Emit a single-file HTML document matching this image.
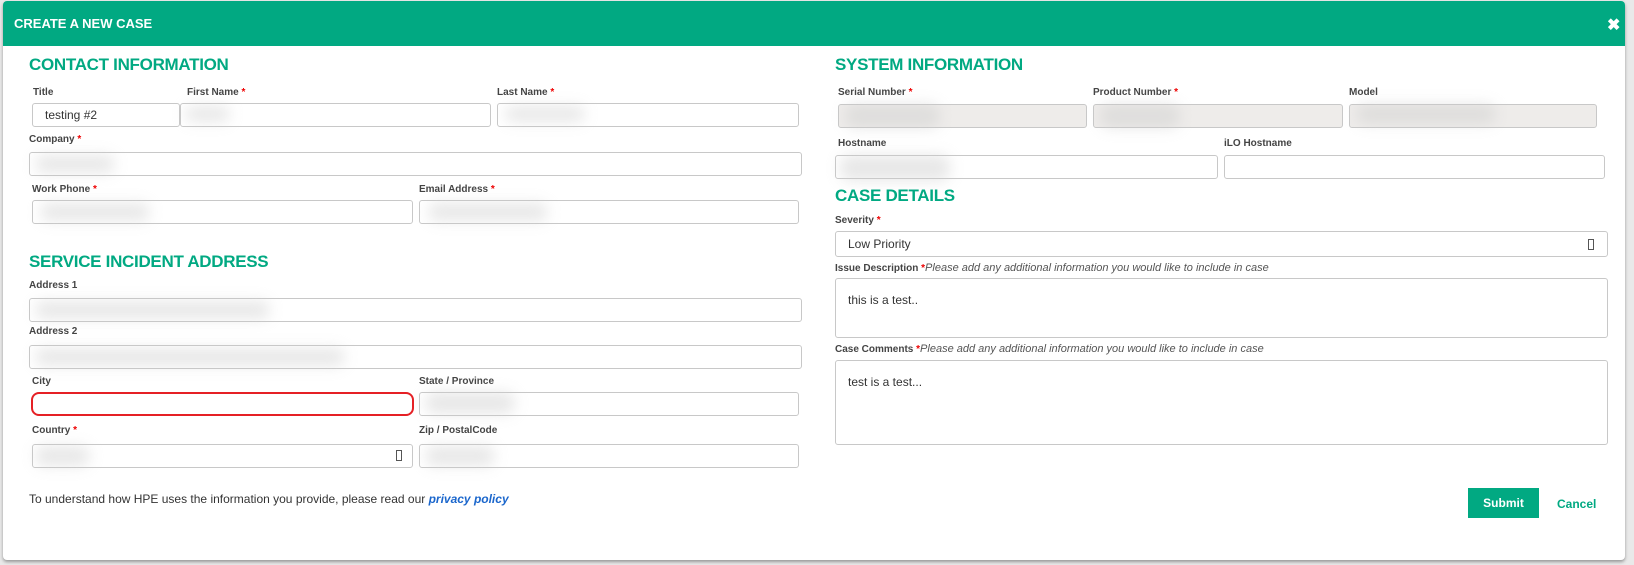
<!DOCTYPE html>
<html><head><meta charset="utf-8"><style>
*{box-sizing:border-box;margin:0;padding:0}
body{width:1634px;height:565px;background:#e9e9e9;font-family:"Liberation Sans",sans-serif;position:relative;overflow:hidden}
.modal{position:absolute;left:3px;top:1px;width:1622px;height:559px;background:#fff;border-radius:4px;box-shadow:0 2px 3px rgba(0,0,0,.35)}
.hdr{position:absolute;left:3px;top:1px;width:1622px;height:45px;background:#01a982;border-radius:4px 4px 0 0}
.abs{position:absolute}
.htitle{left:14px;top:16px;color:#fff;font-weight:bold;font-size:13px}
.x{left:1607px;top:15px;color:#fff;font-weight:bold;font-size:16px}
.sec{position:absolute;color:#01a982;font-weight:bold;font-size:17px;letter-spacing:-0.3px}
.lbl{position:absolute;font-size:10px;font-weight:bold;color:#444;white-space:nowrap}
.lbl i{font-style:italic;font-weight:normal;color:#555;font-size:11px}
.req{color:#e00}
.in{position:absolute;border:1px solid #c8c8c8;border-radius:3px;background:#fff;font-size:12px;color:#333;padding-left:12px;overflow:hidden}
.g{background:#eeecea}
.blur{position:absolute;background:#ccc;filter:blur(7px);border-radius:10px;opacity:.45}
.t{font-size:12px;color:#333}
</style></head><body>
<div class="modal"></div>
<div class="hdr"></div>
<div class="abs htitle">CREATE A NEW CASE</div>
<div class="abs x">✖</div>

<div class="sec" style="left:29px;top:55px">CONTACT INFORMATION</div>
<div class="lbl" style="left:33px;top:87px">Title</div>
<div class="lbl" style="left:187px;top:87px">First Name <span class="req">*</span></div>
<div class="lbl" style="left:497px;top:87px">Last Name <span class="req">*</span></div>
<div class="in" style="left:32px;top:103px;width:148px;height:24px;line-height:22px">testing #2</div>
<div class="in" style="left:180px;top:103px;width:311px;height:24px"></div>
<div class="in" style="left:497px;top:103px;width:302px;height:24px"></div>
<div class="blur" style="left:185px;top:106px;width:45px;height:16px"></div>
<div class="blur" style="left:505px;top:106px;width:80px;height:16px"></div>

<div class="lbl" style="left:29px;top:134px">Company <span class="req">*</span></div>
<div class="in" style="left:29px;top:152px;width:773px;height:24px"></div>
<div class="blur" style="left:35px;top:155px;width:80px;height:18px"></div>

<div class="lbl" style="left:32px;top:184px">Work Phone <span class="req">*</span></div>
<div class="lbl" style="left:419px;top:184px">Email Address <span class="req">*</span></div>
<div class="in" style="left:32px;top:200px;width:381px;height:24px"></div>
<div class="in" style="left:419px;top:200px;width:380px;height:24px"></div>
<div class="blur" style="left:40px;top:203px;width:110px;height:18px"></div>
<div class="blur" style="left:428px;top:203px;width:120px;height:18px"></div>

<div class="sec" style="left:29px;top:252px">SERVICE INCIDENT ADDRESS</div>
<div class="lbl" style="left:29px;top:280px">Address 1</div>
<div class="in" style="left:29px;top:298px;width:773px;height:24px"></div>
<div class="blur" style="left:35px;top:301px;width:235px;height:18px"></div>
<div class="lbl" style="left:29px;top:326px">Address 2</div>
<div class="in" style="left:29px;top:345px;width:773px;height:24px"></div>
<div class="blur" style="left:35px;top:348px;width:310px;height:18px"></div>
<div class="lbl" style="left:32px;top:376px">City</div>
<div class="lbl" style="left:419px;top:376px">State / Province</div>
<div class="in" style="left:31px;top:392px;width:383px;height:24px;border:2px solid #e52025;border-radius:8px"></div>
<div class="in" style="left:419px;top:392px;width:380px;height:24px"></div>
<div class="blur" style="left:425px;top:392px;width:90px;height:22px"></div>
<div class="lbl" style="left:32px;top:425px">Country <span class="req">*</span></div>
<div class="lbl" style="left:419px;top:425px">Zip / PostalCode</div>
<div class="in" style="left:32px;top:444px;width:381px;height:24px"><span style="position:absolute;right:10px;top:5px;width:6px;height:11px;border:1px solid #555"></span></div>
<div class="in" style="left:419px;top:444px;width:380px;height:24px"></div>
<div class="blur" style="left:35px;top:446px;width:55px;height:20px"></div>
<div class="blur" style="left:425px;top:446px;width:70px;height:20px"></div>
<div class="abs t" style="left:29px;top:492px">To understand how HPE uses the information you provide, please read our <b style="color:#1a66cc;font-style:italic">privacy policy</b></div>

<div class="sec" style="left:835px;top:55px">SYSTEM INFORMATION</div>
<div class="lbl" style="left:838px;top:87px">Serial Number <span class="req">*</span></div>
<div class="lbl" style="left:1093px;top:87px">Product Number <span class="req">*</span></div>
<div class="lbl" style="left:1349px;top:87px">Model</div>
<div class="in g" style="left:838px;top:104px;width:249px;height:24px"></div>
<div class="in g" style="left:1093px;top:104px;width:250px;height:24px"></div>
<div class="in g" style="left:1349px;top:104px;width:248px;height:24px"></div>
<div class="blur" style="left:845px;top:104px;width:95px;height:24px"></div>
<div class="blur" style="left:1100px;top:104px;width:80px;height:24px"></div>
<div class="blur" style="left:1356px;top:104px;width:140px;height:20px"></div>
<div class="lbl" style="left:838px;top:138px">Hostname</div>
<div class="lbl" style="left:1224px;top:138px">iLO Hostname</div>
<div class="in" style="left:835px;top:155px;width:383px;height:24px"></div>
<div class="in" style="left:1224px;top:155px;width:381px;height:24px"></div>
<div class="blur" style="left:840px;top:155px;width:110px;height:26px"></div>

<div class="sec" style="left:835px;top:186px">CASE DETAILS</div>
<div class="lbl" style="left:835px;top:215px">Severity <span class="req">*</span></div>
<div class="in" style="left:835px;top:231px;width:773px;height:26px;line-height:24px">Low Priority<span style="position:absolute;right:13px;top:7px;width:6px;height:11px;border:1px solid #555"></span></div>
<div class="lbl" style="left:835px;top:262px">Issue Description <span class="req">*</span><i>Please add any additional information you would like to include in case</i></div>
<div class="in" style="left:835px;top:278px;width:773px;height:60px;padding-top:14px">this is a test..</div>
<div class="lbl" style="left:835px;top:343px">Case Comments <span class="req">*</span><i>Please add any additional information you would like to include in case</i></div>
<div class="in" style="left:835px;top:360px;width:773px;height:85px;padding-top:14px">test is a test...</div>

<div class="abs" style="left:1468px;top:488px;width:71px;height:30px;background:#01a982;color:#fff;font-weight:bold;font-size:12px;text-align:center;line-height:30px">Submit</div>
<div class="abs" style="left:1557px;top:497px;color:#01a982;font-weight:bold;font-size:12px">Cancel</div>
</body></html>
